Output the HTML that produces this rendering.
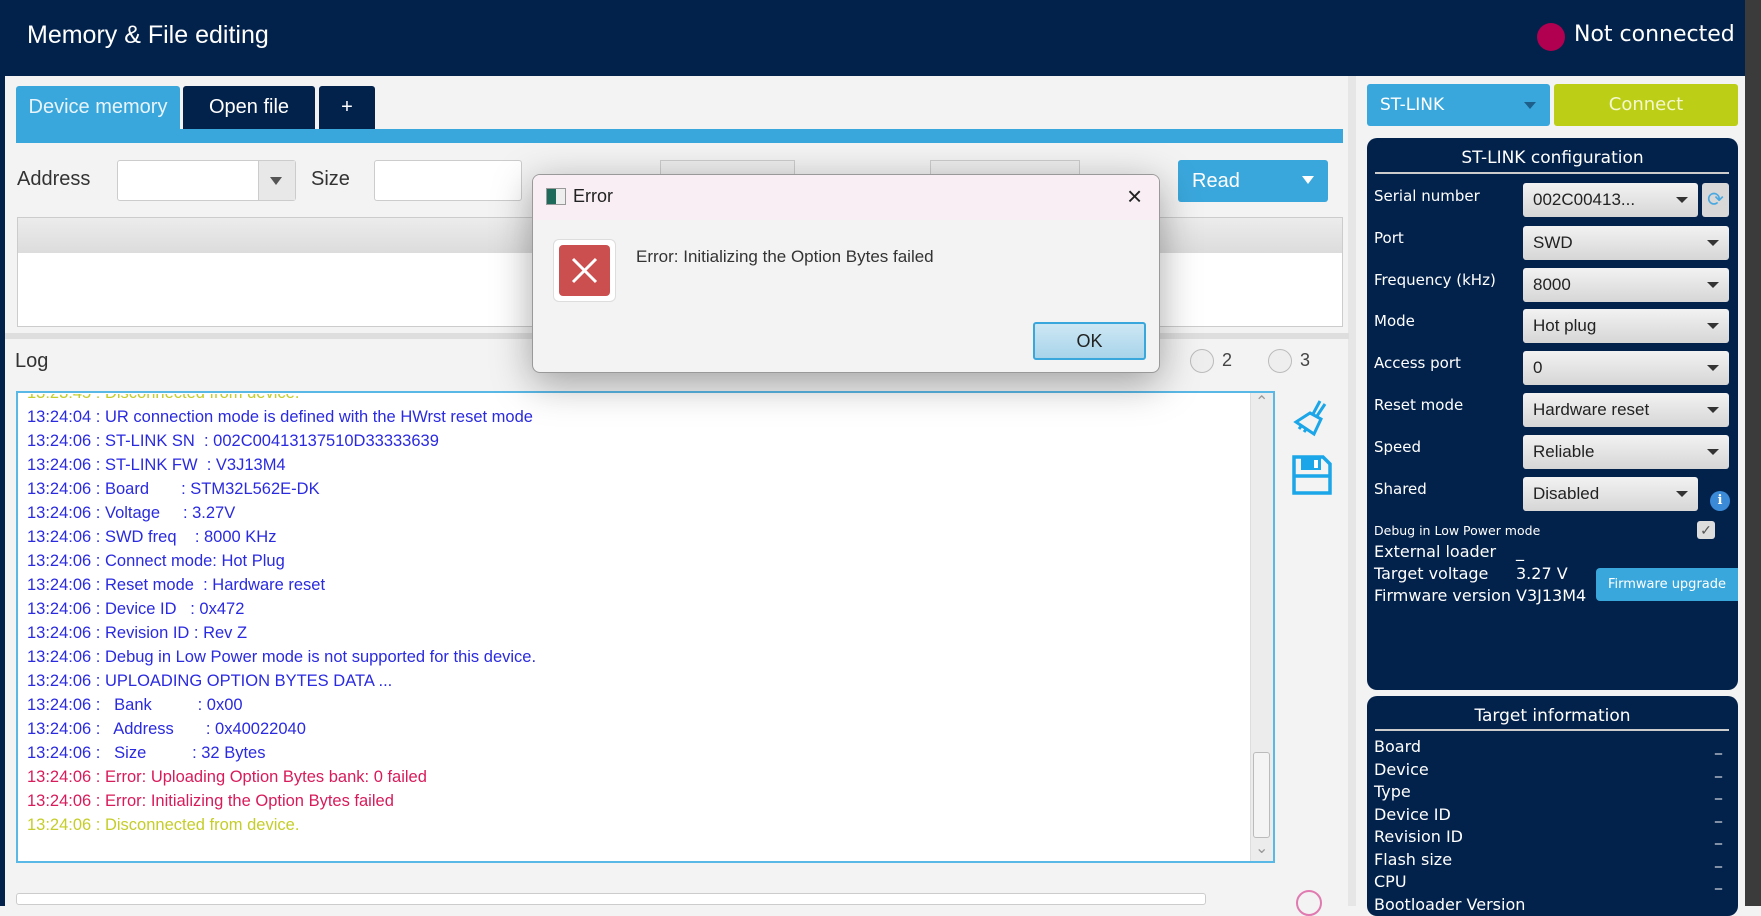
<!DOCTYPE html>
<html style="background:#f3f3f3"><head><meta charset="utf-8"><style>
*{box-sizing:border-box;margin:0;padding:0}
body{width:1761px;height:898px;overflow:hidden;background:#f3f3f3;font-family:"Liberation Sans",sans-serif;position:relative}
.a{position:absolute}
.hdr{left:27px;top:21px;color:#fff;font-size:25px}
.main{left:5px;top:76px;width:1344px;height:830px;background:#f3f3f3}
.tab{top:86px;height:43px;color:#fff;font-size:20px;line-height:43px;text-align:center;border-radius:3px 3px 0 0}
.log div{height:24px;line-height:24px;font-size:16.5px;white-space:pre}
.b{color:#2a2ae0}.r{color:#d81b5a}.y{color:#c5cd2a}
.rp{font-family:"DejaVu Sans",sans-serif;color:#fff}
.lbl{left:1374px;font-size:15px}
.cb{left:1523px;width:206px;height:34px;background:linear-gradient(#f2f2f2,#d6d6d6);border-radius:3px;color:#222;font-size:17px;line-height:34px;padding-left:10px}
.cb:after{content:"";position:absolute;right:10px;top:14px;border:6px solid transparent;border-top:6px solid #333}
.ti{left:1374px;font-size:16px}
.dash{left:1715px;font-size:14px}
</style></head><body>
<div class="a" style="left:0;top:0;width:1761px;height:76px;background:#03224b"></div>
<div class="a" style="left:0;top:76px;width:5px;height:830px;background:#03224b"></div>
<div class="a hdr">Memory &amp; File editing</div>
<div class="a" style="left:1537px;top:23px;width:28px;height:28px;border-radius:50%;background:#b0004f"></div>
<div class="a" style="left:1574px;top:22px;color:#fff;font-family:'DejaVu Sans',sans-serif;font-size:22px">Not connected</div>

<div class="a main"></div>
<div class="a" style="left:1348px;top:76px;width:8px;height:830px;background:#e6e6e6"></div>
<div class="a" style="left:1356px;top:76px;width:389px;height:830px;background:#f3f3f3"></div>
<div class="a" style="left:1745px;top:0;width:16px;height:906px;background:#3b3b3b"></div>

<div class="a tab" style="left:16px;width:164px;background:#3aa7dc;color:#e8f4fb">Device memory</div>
<div class="a tab" style="left:183px;width:132px;background:#03224b">Open file</div>
<div class="a tab" style="left:319px;width:56px;background:#03224b">+</div>
<div class="a" style="left:16px;top:129px;width:1327px;height:14px;background:#3aa7dc"></div>

<div class="a" style="left:17px;top:168px;font-size:20px;color:#333">Address</div>
<div class="a" style="left:117px;top:160px;width:179px;height:41px;background:#fff;border:1px solid #ccc;border-radius:3px"></div>
<div class="a" style="left:258px;top:161px;width:37px;height:39px;background:#e8e8e8;border-left:1px solid #ccc"></div>
<div class="a" style="left:270px;top:177px;border:6px solid transparent;border-top:8px solid #555"></div>
<div class="a" style="left:311px;top:168px;font-size:20px;color:#333">Size</div>
<div class="a" style="left:374px;top:160px;width:148px;height:41px;background:#fff;border:1px solid #ccc;border-radius:3px"></div>
<div class="a" style="left:660px;top:160px;width:135px;height:30px;background:#eee;border:1px solid #ccc"></div>
<div class="a" style="left:930px;top:160px;width:150px;height:30px;background:#eee;border:1px solid #ccc"></div>
<div class="a" style="left:1178px;top:160px;width:150px;height:42px;background:#3aa7dc;border-radius:3px;color:#fff;font-size:20px;line-height:42px;padding-left:14px">Read</div>
<div class="a" style="left:1302px;top:176px;border:6px solid transparent;border-top:8px solid #fff"></div>

<div class="a" style="left:17px;top:217px;width:1326px;height:110px;background:#fff;border:1px solid #ccc"></div>
<div class="a" style="left:18px;top:218px;width:1324px;height:35px;background:linear-gradient(#ececec,#dcdcdc)"></div>
<div class="a" style="left:5px;top:333px;width:1344px;height:6px;background:#dedede"></div>

<div class="a" style="left:15px;top:350px;font-size:20px;color:#333">Log</div>
<div class="a" style="left:1190px;top:349px;width:24px;height:24px;border-radius:50%;border:1px solid #bbb;background:#eee"></div>
<div class="a" style="left:1222px;top:350px;font-size:18px;color:#444">2</div>
<div class="a" style="left:1268px;top:349px;width:24px;height:24px;border-radius:50%;border:1px solid #bbb;background:#eee"></div>
<div class="a" style="left:1300px;top:350px;font-size:18px;color:#444">3</div>

<div class="a" style="left:16px;top:391px;width:1259px;height:472px;background:#fff;border:2px solid #5ab8e6"></div>
<div class="a log" style="left:27px;top:394px;width:1210px;height:467px;overflow:hidden">
<div class="y" style="margin-top:-13px">13:23:45 : Disconnected from device.</div>
<div class="b">13:24:04 : UR connection mode is defined with the HWrst reset mode</div>
<div class="b">13:24:06 : ST-LINK SN  : 002C00413137510D33333639</div>
<div class="b">13:24:06 : ST-LINK FW  : V3J13M4</div>
<div class="b">13:24:06 : Board       : STM32L562E-DK</div>
<div class="b">13:24:06 : Voltage     : 3.27V</div>
<div class="b">13:24:06 : SWD freq    : 8000 KHz</div>
<div class="b">13:24:06 : Connect mode: Hot Plug</div>
<div class="b">13:24:06 : Reset mode  : Hardware reset</div>
<div class="b">13:24:06 : Device ID   : 0x472</div>
<div class="b">13:24:06 : Revision ID : Rev Z</div>
<div class="b">13:24:06 : Debug in Low Power mode is not supported for this device.</div>
<div class="b">13:24:06 : UPLOADING OPTION BYTES DATA ...</div>
<div class="b">13:24:06 :   Bank          : 0x00</div>
<div class="b">13:24:06 :   Address       : 0x40022040</div>
<div class="b">13:24:06 :   Size          : 32 Bytes</div>
<div class="r">13:24:06 : Error: Uploading Option Bytes bank: 0 failed</div>
<div class="r">13:24:06 : Error: Initializing the Option Bytes failed</div>
<div class="y">13:24:06 : Disconnected from device.</div>
</div>
<div class="a" style="left:1250px;top:393px;width:23px;height:468px;background:#ececec;border-left:1px solid #ddd"></div>
<div class="a" style="left:1253px;top:752px;width:17px;height:86px;background:#f4f4f4;border:1px solid #bbb;border-radius:3px"></div>
<div class="a" style="left:1255px;top:392px;color:#999;font-size:16px">&#8963;</div>
<div class="a" style="left:1255px;top:838px;color:#999;font-size:16px">&#8964;</div>

<svg class="a" style="left:1290px;top:398px" width="42" height="42" viewBox="0 0 42 42" fill="none" stroke="#1aa6e8" stroke-width="3"><path d="M30 3 L23 16 M35 6 L27 18"/><path d="M20 15 L31 21 L24 36 L6 24 Z"/><path d="M12 27 L9 31 M17 30 L14 34"/></svg>
<svg class="a" style="left:1292px;top:455px" width="40" height="40" viewBox="0 0 40 40"><path d="M2 2 H31 L38 9 V38 H2 Z" fill="none" stroke="#1aa6e8" stroke-width="3.5"/><rect x="9" y="3" width="20" height="12" fill="#1aa6e8"/><rect x="22" y="5" width="4" height="8" fill="#fff"/><line x1="2" y1="21" x2="38" y2="21" stroke="#1aa6e8" stroke-width="3.5"/></svg>

<div class="a" style="left:16px;top:893px;width:1190px;height:12px;background:#fff;border:1px solid #ccc;border-radius:3px"></div>
<div class="a" style="left:1296px;top:890px;width:26px;height:26px;border-radius:50%;border:2px solid #e07ab0"></div>

<!-- right panel -->
<div class="a rp" style="left:1367px;top:84px;width:183px;height:42px;background:#3aa7dc;border-radius:3px;font-size:17px;line-height:42px;padding-left:13px">ST-LINK</div>
<div class="a" style="left:1524px;top:102px;border:6px solid transparent;border-top:7px solid #1d5f8a"></div>
<div class="a rp" style="left:1554px;top:84px;width:184px;height:42px;background:#bccf16;border-radius:3px;font-size:18px;line-height:42px;text-align:center;color:#f4f7d0">Connect</div>

<div class="a" style="left:1367px;top:138px;width:371px;height:552px;background:#03224b;border-radius:10px"></div>
<div class="a rp" style="left:1367px;top:148px;width:371px;text-align:center;font-size:17px">ST-LINK configuration</div>
<div class="a" style="left:1375px;top:172px;width:354px;height:2px;background:#ccc"></div>
<div class="a rp lbl" style="top:187px">Serial number</div>
<div class="a cb" style="top:183px;width:175px">002C00413...</div>
<div class="a" style="left:1702px;top:183px;width:27px;height:34px;background:#d8d8d8;border-radius:3px;color:#4aa8e0;font-size:20px;text-align:center;line-height:34px">&#10227;</div>
<div class="a rp lbl" style="top:229px">Port</div><div class="a cb" style="top:226px">SWD</div>
<div class="a rp lbl" style="top:271px">Frequency (kHz)</div><div class="a cb" style="top:268px">8000</div>
<div class="a rp lbl" style="top:312px">Mode</div><div class="a cb" style="top:309px">Hot plug</div>
<div class="a rp lbl" style="top:354px">Access port</div><div class="a cb" style="top:351px">0</div>
<div class="a rp lbl" style="top:396px">Reset mode</div><div class="a cb" style="top:393px">Hardware reset</div>
<div class="a rp lbl" style="top:438px">Speed</div><div class="a cb" style="top:435px">Reliable</div>
<div class="a rp lbl" style="top:480px">Shared</div><div class="a cb" style="top:477px;width:175px">Disabled</div>
<div class="a" style="left:1710px;top:491px;width:20px;height:20px;border-radius:50%;background:#3a8ad8;color:#fff;font-size:13px;font-weight:bold;text-align:center;line-height:20px;font-family:'DejaVu Serif',serif">i</div>
<div class="a rp" style="left:1374px;top:523px;font-size:12.5px">Debug in Low Power mode</div>
<div class="a" style="left:1697px;top:521px;width:18px;height:18px;background:#ddd;border-radius:3px;color:#555;font-size:14px;text-align:center;line-height:18px">&#10003;</div>
<div class="a rp" style="left:1374px;top:541px;font-size:16px;line-height:22px">External loader<br>Target voltage<br>Firmware version</div>
<div class="a rp" style="left:1516px;top:541px;font-size:16px;line-height:22px">_<br>3.27 V<br>V3J13M4</div>
<div class="a rp" style="left:1596px;top:568px;width:142px;height:33px;background:#3aa7dc;border-radius:4px 0 0 4px;font-size:13px;text-align:center;line-height:33px">Firmware upgrade</div>

<div class="a" style="left:1367px;top:696px;width:371px;height:220px;background:#03224b;border-radius:10px"></div>
<div class="a rp" style="left:1367px;top:706px;width:371px;text-align:center;font-size:17px">Target information</div>
<div class="a" style="left:1375px;top:729px;width:354px;height:2px;background:#ccc"></div>
<div class="a rp ti" style="top:736px;line-height:22.5px">Board<br>Device<br>Type<br>Device ID<br>Revision ID<br>Flash size<br>CPU<br>Bootloader Version</div>
<div class="a rp dash" style="top:736px;line-height:22.5px">_<br>_<br>_<br>_<br>_<br>_<br>_</div>

<!-- dialog -->
<div class="a" style="left:532px;top:174px;width:628px;height:199px;background:#f3f3f3;border:1px solid #999;border-radius:8px;box-shadow:0 10px 40px rgba(0,0,0,.35);overflow:hidden">
 <div style="height:45px;background:#f8eef4;position:relative">
  <div class="a" style="left:13px;top:13px;width:20px;height:17px;border:1px solid #999;background:linear-gradient(90deg,#1e6a5a 50%,#eee 50%)"></div>
  <div class="a" style="left:40px;top:11px;font-size:18px;color:#222">Error</div>
  <div class="a" style="left:594px;top:6px;font-size:26px;color:#222;font-weight:300">&#215;</div>
 </div>
 <div class="a" style="left:20px;top:64px;width:63px;height:63px;background:#fff;border:1px solid #ddd;border-radius:6px"></div>
 <div class="a" style="left:26px;top:70px;width:51px;height:51px;background:#cc4f4f;border-radius:4px"></div>
 <svg class="a" style="left:36px;top:80px" width="31" height="31"><path d="M4 4 L27 27 M27 4 L4 27" stroke="#fff" stroke-width="3"/></svg>
 <div class="a" style="left:103px;top:72px;font-size:17px;color:#333">Error: Initializing the Option Bytes failed</div>
 <div class="a" style="left:500px;top:147px;width:113px;height:38px;background:linear-gradient(#cde7f4,#a8d4ea);border:2px solid #3aa7dc;border-radius:3px;text-align:center;line-height:34px;font-size:18px;color:#222">OK</div>
</div>
</body></html>
